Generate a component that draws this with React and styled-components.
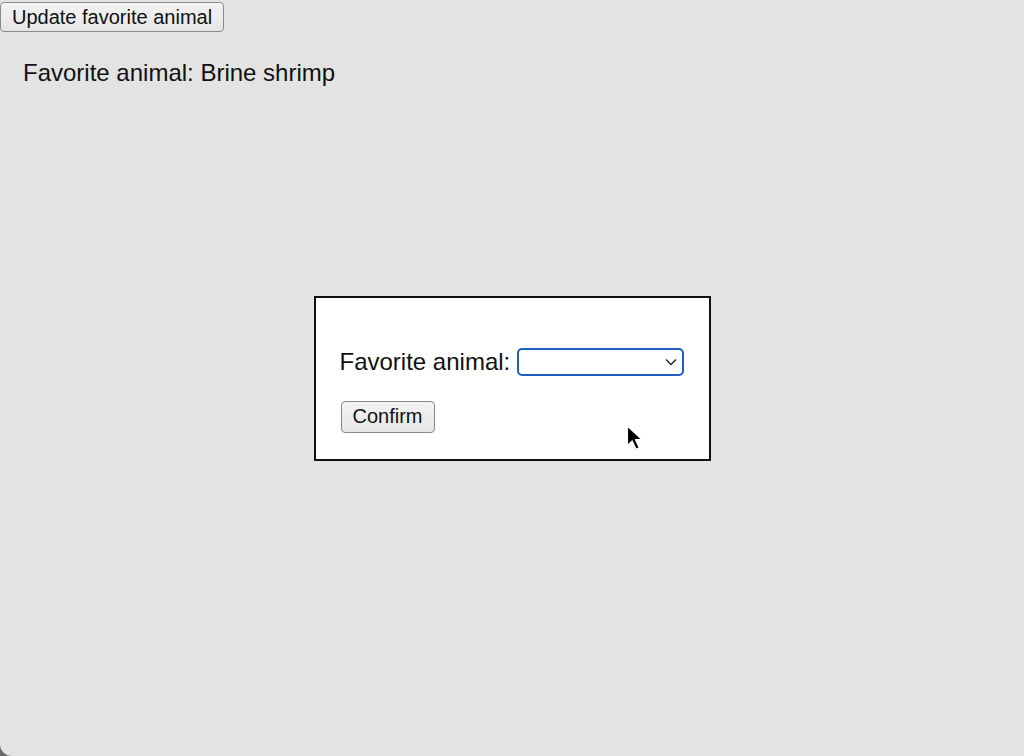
import React, { useState } from "react";
import styled, { createGlobalStyle } from "styled-components";

const GlobalStyle = createGlobalStyle`
  html {
    background: #6b6b6b;
  }
  body {
    margin: 0;
    font-family: "Liberation Sans", Arial, sans-serif;
    color: #111;
  }
`;

const Page = styled.div`
  min-height: 100vh;
  background: #e3e3e3;
  border-bottom-left-radius: 12px;
  padding-top: 2px;
  box-sizing: border-box;
`;

const NativeButton = styled.button`
  font-family: "Liberation Sans", Arial, sans-serif;
  font-size: 20px;
  color: #111;
  background: linear-gradient(#f3f3f3, #e6e6e6);
  border: 1px solid #8a8a8a;
  border-radius: 4px;
  height: ${(p) => p.$height || 30}px;
  padding: 0 ${(p) => p.$pad || 11}px;
  cursor: default;
`;

const Current = styled.p`
  margin: 27px 0 0 23px;
  font-size: 24px;
  line-height: 28px;
`;

const Overlay = styled.div`
  position: fixed;
  inset: 0;
  display: flex;
  align-items: center;
  justify-content: center;
`;

const Dialog = styled.div`
  position: relative;
  width: 397px;
  height: 165px;
  box-sizing: border-box;
  background: #fff;
  border: 2px solid #111;
  padding: 50px 16px 0 24px;
`;

const Row = styled.label`
  display: flex;
  align-items: center;
  gap: 7px;
  font-size: 24px;
  line-height: 28px;
  white-space: nowrap;
`;

const SelectBox = styled.div`
  position: relative;
  flex-shrink: 0;
  width: 167px;
  height: 28px;
  box-sizing: border-box;
  border: 2.5px solid #1f5fbf;
  border-radius: 5px;
  background: #fff;
`;

const Chevron = styled.svg`
  position: absolute;
  right: 5px;
  top: 8px;
`;

const Actions = styled.div`
  margin-top: 25px;
  padding-left: 1px;
`;

const Cursor = styled.svg`
  position: absolute;
  left: 310px;
  top: 127px;
`;

export default function App() {
  const [animal] = useState("Brine shrimp");

  return (
    <>
      <GlobalStyle />
      <Page>
        <NativeButton $height={30} $pad={11}>
          Update favorite animal
        </NativeButton>
        <Current>Favorite animal: {animal}</Current>
      </Page>
      <Overlay>
        <Dialog>
          <Row>
            Favorite animal:
            <SelectBox>
              <Chevron width="12" height="8" viewBox="0 0 12 8">
                <path d="M1 1.5 L6 6.5 L11 1.5" fill="none" stroke="#222" strokeWidth="1.4" />
              </Chevron>
            </SelectBox>
          </Row>
          <Actions>
            <NativeButton $height={32} $pad={11}>
              Confirm
            </NativeButton>
          </Actions>
          <Cursor width="20" height="28" viewBox="0 0 18 26">
            <path
              d="M1 1 L1 19 L5.5 14.8 L9 22.5 L12 21.2 L8.6 13.6 L14.5 13.4 Z"
              fill="#000"
              stroke="#fff"
              strokeWidth="1.2"
              strokeLinejoin="round"
            />
          </Cursor>
        </Dialog>
      </Overlay>
    </>
  );
}
